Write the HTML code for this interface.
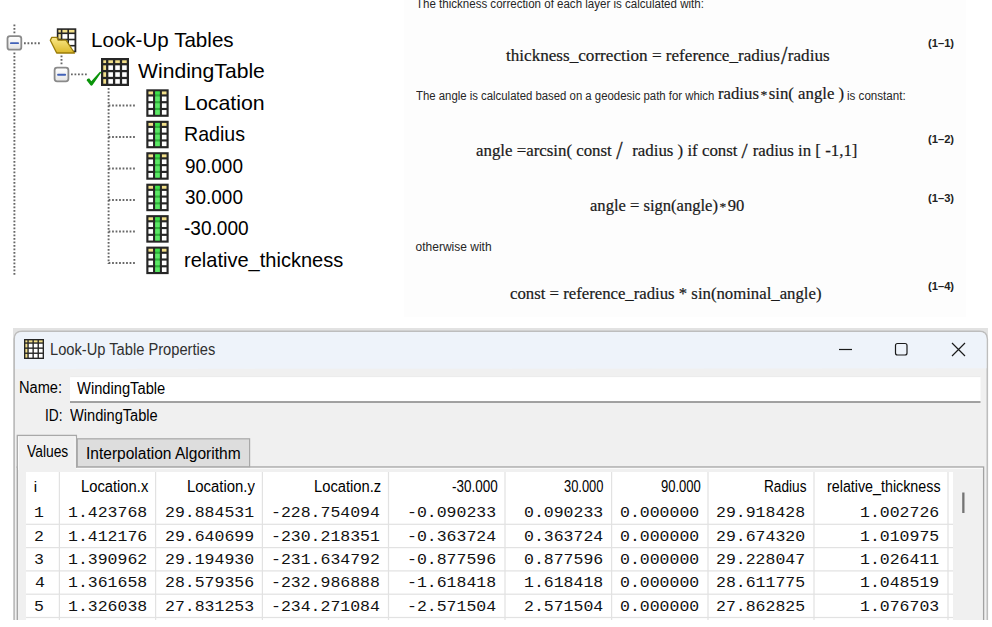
<!DOCTYPE html><html><head><meta charset="utf-8"><style>
html,body{margin:0;padding:0;width:992px;height:627px;overflow:hidden;background:#fff;position:relative}
.t{position:absolute;white-space:pre;line-height:normal}
</style></head><body>
<svg style="position:absolute;left:0;top:0" width="992" height="627"><defs><linearGradient id="bg" x1="0" y1="0" x2="0" y2="1"><stop offset="0" stop-color="#fff"/><stop offset="1" stop-color="#e4e4e4"/></linearGradient><linearGradient id="fold" x1="0" y1="0" x2="0" y2="1"><stop offset="0" stop-color="#fbe98a"/><stop offset="1" stop-color="#dcb92a"/></linearGradient></defs><line x1="14.4" y1="24.5" x2="14.4" y2="34.5" stroke="#666" stroke-width="1.9" stroke-dasharray="1.75 1.75"/><line x1="14.4" y1="52.5" x2="14.4" y2="275" stroke="#666" stroke-width="1.9" stroke-dasharray="1.75 1.75"/><line x1="24" y1="43.2" x2="41" y2="43.2" stroke="#666" stroke-width="1.9" stroke-dasharray="1.75 1.75"/><line x1="61.5" y1="55.5" x2="61.5" y2="66" stroke="#666" stroke-width="1.9" stroke-dasharray="1.75 1.75"/><line x1="71" y1="74.4" x2="87" y2="74.4" stroke="#666" stroke-width="1.9" stroke-dasharray="1.75 1.75"/><line x1="108.6" y1="88" x2="108.6" y2="264" stroke="#666" stroke-width="1.9" stroke-dasharray="1.75 1.75"/><line x1="108.6" y1="105.5" x2="135" y2="105.5" stroke="#666" stroke-width="1.9" stroke-dasharray="1.75 1.75"/><line x1="108.6" y1="137.0" x2="135" y2="137.0" stroke="#666" stroke-width="1.9" stroke-dasharray="1.75 1.75"/><line x1="108.6" y1="168.5" x2="135" y2="168.5" stroke="#666" stroke-width="1.9" stroke-dasharray="1.75 1.75"/><line x1="108.6" y1="200.0" x2="135" y2="200.0" stroke="#666" stroke-width="1.9" stroke-dasharray="1.75 1.75"/><line x1="108.6" y1="231.5" x2="135" y2="231.5" stroke="#666" stroke-width="1.9" stroke-dasharray="1.75 1.75"/><line x1="108.6" y1="263.0" x2="135" y2="263.0" stroke="#666" stroke-width="1.9" stroke-dasharray="1.75 1.75"/><rect x="7.5" y="36.1" width="13.8" height="13.6" rx="2.5" fill="url(#bg)" stroke="#8a8a8a" stroke-width="1.8"/><rect x="10.0" y="42.2" width="9" height="1.9" rx="0.9" fill="#4262b8"/><rect x="54.6" y="67.7" width="13.8" height="13.6" rx="2.5" fill="url(#bg)" stroke="#8a8a8a" stroke-width="1.8"/><rect x="57.1" y="73.8" width="9" height="1.9" rx="0.9" fill="#4262b8"/><g transform="translate(56.8,28.3)"><rect x="0" y="0" width="19.5" height="24" fill="#262626"/><rect x="1.6" y="1.6" width="2.4" height="2.6" fill="#f3e08a"/><rect x="1.6" y="5.8" width="2.4" height="4.6" fill="#f3e08a"/><rect x="1.6" y="12" width="2.4" height="4.6" fill="#f3e08a"/><rect x="1.6" y="18.2" width="2.4" height="4.2" fill="#f3e08a"/><rect x="5.6" y="1.6" width="5" height="2.6" fill="#f3e08a"/><rect x="5.6" y="5.8" width="5" height="4.6" fill="#ffffff"/><rect x="5.6" y="12" width="5" height="4.6" fill="#ffffff"/><rect x="5.6" y="18.2" width="5" height="4.2" fill="#ffffff"/><rect x="12.2" y="1.6" width="5.5" height="2.6" fill="#f3e08a"/><rect x="12.2" y="5.8" width="5.5" height="4.6" fill="#ffffff"/><rect x="12.2" y="12" width="5.5" height="4.6" fill="#ffffff"/><rect x="12.2" y="18.2" width="5.5" height="4.2" fill="#ffffff"/></g><polygon points="50.3,40.2 51.8,37.4 57,37.4 58.2,40.2 66,40.2 74.5,53 56.7,53" fill="url(#fold)" stroke="#9a7c08" stroke-width="1.3" stroke-linejoin="round"/><g transform="translate(101,58) scale(1.75)"><rect x="0" y="0" width="16" height="16" fill="#262626"/><rect x="1.300" y="1.300" width="1.600" height="1.600" fill="#f3e08a"/><rect x="1.300" y="4.200" width="1.600" height="2.633" fill="#f3e08a"/><rect x="1.300" y="8.133" width="1.600" height="2.633" fill="#f3e08a"/><rect x="1.300" y="12.067" width="1.600" height="2.633" fill="#f3e08a"/><rect x="4.200" y="1.300" width="2.633" height="1.600" fill="#f3e08a"/><rect x="4.200" y="4.200" width="2.633" height="2.633" fill="#ffffff"/><rect x="4.200" y="8.133" width="2.633" height="2.633" fill="#ffffff"/><rect x="4.200" y="12.067" width="2.633" height="2.633" fill="#ffffff"/><rect x="8.133" y="1.300" width="2.633" height="1.600" fill="#f3e08a"/><rect x="8.133" y="4.200" width="2.633" height="2.633" fill="#ffffff"/><rect x="8.133" y="8.133" width="2.633" height="2.633" fill="#ffffff"/><rect x="8.133" y="12.067" width="2.633" height="2.633" fill="#ffffff"/><rect x="12.067" y="1.300" width="2.633" height="1.600" fill="#f3e08a"/><rect x="12.067" y="4.200" width="2.633" height="2.633" fill="#ffffff"/><rect x="12.067" y="8.133" width="2.633" height="2.633" fill="#ffffff"/><rect x="12.067" y="12.067" width="2.633" height="2.633" fill="#ffffff"/></g><path d="M86.6,80.2 Q87.2,77.9 89.4,78.6 L91.3,81.3 L99.9,71.7 Q101,71.4 101.2,72.6 L92.6,84.9 Q91.4,86.4 90.3,85 Z" fill="#0a940a"/><g transform="translate(146.3,89.3) scale(1.72)"><rect x="0" y="0" width="13" height="16" fill="#262626"/><rect x="1.250" y="1.250" width="2.667" height="1.700" fill="#f3e08a"/><rect x="1.250" y="4.200" width="2.667" height="2.683" fill="#ffffff"/><rect x="1.250" y="8.133" width="2.667" height="2.683" fill="#ffffff"/><rect x="1.250" y="12.067" width="2.667" height="2.683" fill="#ffffff"/><rect x="5.167" y="1.25" width="2.667" height="13.5" fill="#2fb53a"/><rect x="5.167" y="1.250" width="2.667" height="1.700" fill="#3fe24a"/><rect x="5.167" y="4.200" width="2.667" height="2.683" fill="#5ce866"/><rect x="5.167" y="8.133" width="2.667" height="2.683" fill="#5ce866"/><rect x="5.167" y="12.067" width="2.667" height="2.683" fill="#5ce866"/><rect x="9.083" y="1.250" width="2.667" height="1.700" fill="#f3e08a"/><rect x="9.083" y="4.200" width="2.667" height="2.683" fill="#ffffff"/><rect x="9.083" y="8.133" width="2.667" height="2.683" fill="#ffffff"/><rect x="9.083" y="12.067" width="2.667" height="2.683" fill="#ffffff"/></g><g transform="translate(146.3,120.75999999999999) scale(1.72)"><rect x="0" y="0" width="13" height="16" fill="#262626"/><rect x="1.250" y="1.250" width="2.667" height="1.700" fill="#f3e08a"/><rect x="1.250" y="4.200" width="2.667" height="2.683" fill="#ffffff"/><rect x="1.250" y="8.133" width="2.667" height="2.683" fill="#ffffff"/><rect x="1.250" y="12.067" width="2.667" height="2.683" fill="#ffffff"/><rect x="5.167" y="1.25" width="2.667" height="13.5" fill="#2fb53a"/><rect x="5.167" y="1.250" width="2.667" height="1.700" fill="#3fe24a"/><rect x="5.167" y="4.200" width="2.667" height="2.683" fill="#5ce866"/><rect x="5.167" y="8.133" width="2.667" height="2.683" fill="#5ce866"/><rect x="5.167" y="12.067" width="2.667" height="2.683" fill="#5ce866"/><rect x="9.083" y="1.250" width="2.667" height="1.700" fill="#f3e08a"/><rect x="9.083" y="4.200" width="2.667" height="2.683" fill="#ffffff"/><rect x="9.083" y="8.133" width="2.667" height="2.683" fill="#ffffff"/><rect x="9.083" y="12.067" width="2.667" height="2.683" fill="#ffffff"/></g><g transform="translate(146.3,152.22) scale(1.72)"><rect x="0" y="0" width="13" height="16" fill="#262626"/><rect x="1.250" y="1.250" width="2.667" height="1.700" fill="#f3e08a"/><rect x="1.250" y="4.200" width="2.667" height="2.683" fill="#ffffff"/><rect x="1.250" y="8.133" width="2.667" height="2.683" fill="#ffffff"/><rect x="1.250" y="12.067" width="2.667" height="2.683" fill="#ffffff"/><rect x="5.167" y="1.25" width="2.667" height="13.5" fill="#2fb53a"/><rect x="5.167" y="1.250" width="2.667" height="1.700" fill="#3fe24a"/><rect x="5.167" y="4.200" width="2.667" height="2.683" fill="#5ce866"/><rect x="5.167" y="8.133" width="2.667" height="2.683" fill="#5ce866"/><rect x="5.167" y="12.067" width="2.667" height="2.683" fill="#5ce866"/><rect x="9.083" y="1.250" width="2.667" height="1.700" fill="#f3e08a"/><rect x="9.083" y="4.200" width="2.667" height="2.683" fill="#ffffff"/><rect x="9.083" y="8.133" width="2.667" height="2.683" fill="#ffffff"/><rect x="9.083" y="12.067" width="2.667" height="2.683" fill="#ffffff"/></g><g transform="translate(146.3,183.68) scale(1.72)"><rect x="0" y="0" width="13" height="16" fill="#262626"/><rect x="1.250" y="1.250" width="2.667" height="1.700" fill="#f3e08a"/><rect x="1.250" y="4.200" width="2.667" height="2.683" fill="#ffffff"/><rect x="1.250" y="8.133" width="2.667" height="2.683" fill="#ffffff"/><rect x="1.250" y="12.067" width="2.667" height="2.683" fill="#ffffff"/><rect x="5.167" y="1.25" width="2.667" height="13.5" fill="#2fb53a"/><rect x="5.167" y="1.250" width="2.667" height="1.700" fill="#3fe24a"/><rect x="5.167" y="4.200" width="2.667" height="2.683" fill="#5ce866"/><rect x="5.167" y="8.133" width="2.667" height="2.683" fill="#5ce866"/><rect x="5.167" y="12.067" width="2.667" height="2.683" fill="#5ce866"/><rect x="9.083" y="1.250" width="2.667" height="1.700" fill="#f3e08a"/><rect x="9.083" y="4.200" width="2.667" height="2.683" fill="#ffffff"/><rect x="9.083" y="8.133" width="2.667" height="2.683" fill="#ffffff"/><rect x="9.083" y="12.067" width="2.667" height="2.683" fill="#ffffff"/></g><g transform="translate(146.3,215.14) scale(1.72)"><rect x="0" y="0" width="13" height="16" fill="#262626"/><rect x="1.250" y="1.250" width="2.667" height="1.700" fill="#f3e08a"/><rect x="1.250" y="4.200" width="2.667" height="2.683" fill="#ffffff"/><rect x="1.250" y="8.133" width="2.667" height="2.683" fill="#ffffff"/><rect x="1.250" y="12.067" width="2.667" height="2.683" fill="#ffffff"/><rect x="5.167" y="1.25" width="2.667" height="13.5" fill="#2fb53a"/><rect x="5.167" y="1.250" width="2.667" height="1.700" fill="#3fe24a"/><rect x="5.167" y="4.200" width="2.667" height="2.683" fill="#5ce866"/><rect x="5.167" y="8.133" width="2.667" height="2.683" fill="#5ce866"/><rect x="5.167" y="12.067" width="2.667" height="2.683" fill="#5ce866"/><rect x="9.083" y="1.250" width="2.667" height="1.700" fill="#f3e08a"/><rect x="9.083" y="4.200" width="2.667" height="2.683" fill="#ffffff"/><rect x="9.083" y="8.133" width="2.667" height="2.683" fill="#ffffff"/><rect x="9.083" y="12.067" width="2.667" height="2.683" fill="#ffffff"/></g><g transform="translate(146.3,246.60000000000002) scale(1.72)"><rect x="0" y="0" width="13" height="16" fill="#262626"/><rect x="1.250" y="1.250" width="2.667" height="1.700" fill="#f3e08a"/><rect x="1.250" y="4.200" width="2.667" height="2.683" fill="#ffffff"/><rect x="1.250" y="8.133" width="2.667" height="2.683" fill="#ffffff"/><rect x="1.250" y="12.067" width="2.667" height="2.683" fill="#ffffff"/><rect x="5.167" y="1.25" width="2.667" height="13.5" fill="#2fb53a"/><rect x="5.167" y="1.250" width="2.667" height="1.700" fill="#3fe24a"/><rect x="5.167" y="4.200" width="2.667" height="2.683" fill="#5ce866"/><rect x="5.167" y="8.133" width="2.667" height="2.683" fill="#5ce866"/><rect x="5.167" y="12.067" width="2.667" height="2.683" fill="#5ce866"/><rect x="9.083" y="1.250" width="2.667" height="1.700" fill="#f3e08a"/><rect x="9.083" y="4.200" width="2.667" height="2.683" fill="#ffffff"/><rect x="9.083" y="8.133" width="2.667" height="2.683" fill="#ffffff"/><rect x="9.083" y="12.067" width="2.667" height="2.683" fill="#ffffff"/></g></svg>
<div class="t" style="left:90.52px;top:28px;font-family:'Liberation Sans', sans-serif;font-size:21px;color:#000;font-weight:normal;transform:scaleX(0.9799);transform-origin:0 0;">Look-Up Tables</div>
<div class="t" style="left:138.00px;top:59px;font-family:'Liberation Sans', sans-serif;font-size:21px;color:#000;font-weight:normal;transform:scaleX(1.0063);transform-origin:0 0;">WindingTable</div>
<div class="t" style="left:184.38px;top:91px;font-family:'Liberation Sans', sans-serif;font-size:21px;color:#000;font-weight:normal;transform:scaleX(1.0169);transform-origin:0 0;">Location</div>
<div class="t" style="left:184.47px;top:122px;font-family:'Liberation Sans', sans-serif;font-size:21px;color:#000;font-weight:normal;transform:scaleX(0.9328);transform-origin:0 0;">Radius</div>
<div class="t" style="left:184.50px;top:154px;font-family:'Liberation Sans', sans-serif;font-size:21px;color:#000;font-weight:normal;transform:scaleX(0.9016);transform-origin:0 0;">90.000</div>
<div class="t" style="left:184.50px;top:185px;font-family:'Liberation Sans', sans-serif;font-size:21px;color:#000;font-weight:normal;transform:scaleX(0.9016);transform-origin:0 0;">30.000</div>
<div class="t" style="left:184.49px;top:216px;font-family:'Liberation Sans', sans-serif;font-size:21px;color:#000;font-weight:normal;transform:scaleX(0.9071);transform-origin:0 0;">-30.000</div>
<div class="t" style="left:184.45px;top:248px;font-family:'Liberation Sans', sans-serif;font-size:21px;color:#000;font-weight:normal;transform:scaleX(0.9542);transform-origin:0 0;">relative_thickness</div>
<div style="position:absolute;left:404px;top:0;width:562px;height:317px;background:#fdfdfd"></div>
<div class="t" style="left:416.00px;top:-3px;font-family:'Liberation Sans', sans-serif;font-size:12px;color:#262626;font-weight:normal;transform:scaleX(0.9612);transform-origin:0 0;">The thickness correction of each layer is calculated with:</div>
<div class="t" style="left:506.00px;top:47px;font-family:'Liberation Serif', serif;font-size:16px;color:#1a1a1a;font-weight:normal;transform:scaleX(1.0695);transform-origin:0 0;-webkit-text-stroke:0.2px #1a1a1a;">thickness_correction = reference_radius<span style="display:inline-block;transform:scale(1.35,1.6);margin:0 1.5px">/</span>radius</div>
<div class="t" style="left:416.00px;top:89px;font-family:'Liberation Sans', sans-serif;font-size:12px;color:#262626;font-weight:normal;transform:scaleX(0.9473);transform-origin:0 0;">The angle is calculated based on a geodesic path for which</div>
<div class="t" style="left:718.10px;top:85px;font-family:'Liberation Serif', serif;font-size:16px;color:#1a1a1a;font-weight:normal;transform:scaleX(1.0458);transform-origin:0 0;-webkit-text-stroke:0.2px #1a1a1a;">radius<span style="position:relative;top:-0.5px;font-size:13px;margin:0 1.5px">*</span>sin( angle )</div>
<div class="t" style="left:847.00px;top:89px;font-family:'Liberation Sans', sans-serif;font-size:12px;color:#262626;font-weight:normal;transform:scaleX(0.9667);transform-origin:0 0;">is constant:</div>
<div class="t" style="left:476.00px;top:142px;font-family:'Liberation Serif', serif;font-size:16px;color:#1a1a1a;font-weight:normal;transform:scaleX(1.0525);transform-origin:0 0;-webkit-text-stroke:0.2px #1a1a1a;">angle =arcsin( const <span style="display:inline-block;transform:scale(1.35,1.6);margin:0 1.5px">/</span>  radius ) if const <span style="display:inline-block;transform:scale(1.3);margin:0 1px">/</span> radius in [ -1,1]</div>
<div class="t" style="left:590.00px;top:197px;font-family:'Liberation Serif', serif;font-size:16px;color:#1a1a1a;font-weight:normal;transform:scaleX(1.0349);transform-origin:0 0;-webkit-text-stroke:0.2px #1a1a1a;">angle = sign(angle)<span style="position:relative;top:-0.5px;font-size:13px;margin:0 1.5px">*</span>90</div>
<div class="t" style="left:415.60px;top:240px;font-family:'Liberation Sans', sans-serif;font-size:12px;color:#262626;font-weight:normal;">otherwise with</div>
<div class="t" style="left:510.30px;top:285px;font-family:'Liberation Serif', serif;font-size:16px;color:#1a1a1a;font-weight:normal;transform:scaleX(1.0460);transform-origin:0 0;-webkit-text-stroke:0.2px #1a1a1a;">const = reference_radius * sin(nominal_angle)</div>
<div class="t" style="left:927.60px;top:37px;font-family:'Liberation Sans', sans-serif;font-size:11.5px;color:#222;font-weight:bold;transform:scaleX(0.9704);transform-origin:0 0;">(1–1)</div>
<div class="t" style="left:927.60px;top:133px;font-family:'Liberation Sans', sans-serif;font-size:11.5px;color:#222;font-weight:bold;transform:scaleX(0.9704);transform-origin:0 0;">(1–2)</div>
<div class="t" style="left:927.60px;top:192px;font-family:'Liberation Sans', sans-serif;font-size:11.5px;color:#222;font-weight:bold;transform:scaleX(0.9704);transform-origin:0 0;">(1–3)</div>
<div class="t" style="left:927.60px;top:280px;font-family:'Liberation Sans', sans-serif;font-size:11.5px;color:#222;font-weight:bold;transform:scaleX(0.9704);transform-origin:0 0;">(1–4)</div>
<div style="position:absolute;left:13px;top:328px;width:975px;height:299px;background:#e2e2e2"></div>
<svg style="position:absolute;left:0;top:0" width="992" height="627"><path d="M14.2,640 V339.3 Q14.2,331.3 22.2,331.3 H979.3 Q987.3,331.3 987.3,339.3 V640 Z" fill="#f0f0f0" stroke="#bdbdbd" stroke-width="1.6"/><path d="M15,369 V339.3 Q15,332.1 22.2,332.1 H979.3 Q986.5,332.1 986.5,339.3 V368.3 Z" fill="#eef3fa"/><g transform="translate(24,339) scale(1.25)"><rect x="0" y="0" width="16" height="16" fill="#262626"/><rect x="1.100" y="1.100" width="1.600" height="1.600" fill="#f3e08a"/><rect x="1.100" y="3.800" width="1.600" height="2.967" fill="#f3e08a"/><rect x="1.100" y="7.867" width="1.600" height="2.967" fill="#f3e08a"/><rect x="1.100" y="11.933" width="1.600" height="2.967" fill="#f3e08a"/><rect x="3.800" y="1.100" width="2.967" height="1.600" fill="#f3e08a"/><rect x="3.800" y="3.800" width="2.967" height="2.967" fill="#ffffff"/><rect x="3.800" y="7.867" width="2.967" height="2.967" fill="#ffffff"/><rect x="3.800" y="11.933" width="2.967" height="2.967" fill="#ffffff"/><rect x="7.867" y="1.100" width="2.967" height="1.600" fill="#f3e08a"/><rect x="7.867" y="3.800" width="2.967" height="2.967" fill="#ffffff"/><rect x="7.867" y="7.867" width="2.967" height="2.967" fill="#ffffff"/><rect x="7.867" y="11.933" width="2.967" height="2.967" fill="#ffffff"/><rect x="11.933" y="1.100" width="2.967" height="1.600" fill="#f3e08a"/><rect x="11.933" y="3.800" width="2.967" height="2.967" fill="#ffffff"/><rect x="11.933" y="7.867" width="2.967" height="2.967" fill="#ffffff"/><rect x="11.933" y="11.933" width="2.967" height="2.967" fill="#ffffff"/></g><line x1="839" y1="349.5" x2="852" y2="349.5" stroke="#1a1a1a" stroke-width="1.2"/><rect x="895.5" y="343.5" width="11.5" height="11.5" rx="2" fill="none" stroke="#1a1a1a" stroke-width="1.2"/><path d="M952,343 L965,356 M965,343 L952,356" stroke="#1a1a1a" stroke-width="1.2"/><rect x="70" y="376.3" width="910.5" height="26" rx="1.5" fill="#fff"/><rect x="70.5" y="376.3" width="909.5" height="0.8" fill="#e6e6e6"/><rect x="70" y="401.2" width="910.5" height="1.6" fill="#8c8c8c"/><rect x="17.3" y="467" width="966.3" height="200" fill="#f0f0f0" stroke="#a2a2a2" stroke-width="1.3"/><rect x="77.3" y="438.8" width="172.3" height="28" fill="#dddddd" stroke="#a8a8a8" stroke-width="1.2"/><path d="M17.3,468 V435.3 H76.4 V468" fill="#f0f0f0" stroke="#a8a8a8" stroke-width="1.3"/><rect x="18" y="467" width="58" height="3" fill="#f0f0f0"/><line x1="75.2" y1="436.5" x2="75.2" y2="467" stroke="#fafafa" stroke-width="1"/><line x1="76" y1="468.4" x2="983" y2="468.4" stroke="#fbfbfb" stroke-width="1"/><line x1="18.5" y1="436.5" x2="18.5" y2="470" stroke="#fafafa" stroke-width="1"/></svg>
<div class="t" style="left:49.78px;top:341px;font-family:'Liberation Sans', sans-serif;font-size:16px;color:#303030;font-weight:normal;transform:scaleX(0.9168);transform-origin:0 0;">Look-Up Table Properties</div>
<div class="t" style="left:19.39px;top:379px;font-family:'Liberation Sans', sans-serif;font-size:16px;color:#000;font-weight:normal;transform:scaleX(0.9133);transform-origin:0 0;">Name:</div>
<div class="t" style="left:76.80px;top:380px;font-family:'Liberation Sans', sans-serif;font-size:16px;color:#000;font-weight:normal;transform:scaleX(0.9188);transform-origin:0 0;">WindingTable</div>
<div class="t" style="left:45.14px;top:407px;font-family:'Liberation Sans', sans-serif;font-size:16px;color:#000;font-weight:normal;transform:scaleX(0.8556);transform-origin:0 0;">ID:</div>
<div class="t" style="left:70.00px;top:407px;font-family:'Liberation Sans', sans-serif;font-size:16px;color:#000;font-weight:normal;transform:scaleX(0.9135);transform-origin:0 0;">WindingTable</div>
<div class="t" style="left:27.00px;top:443px;font-family:'Liberation Sans', sans-serif;font-size:16px;color:#000;font-weight:normal;transform:scaleX(0.8646);transform-origin:0 0;">Values</div>
<div class="t" style="left:86.23px;top:445px;font-family:'Liberation Sans', sans-serif;font-size:16px;color:#000;font-weight:normal;transform:scaleX(0.9709);transform-origin:0 0;">Interpolation Algorithm</div>
<svg style="position:absolute;left:0;top:0" width="992" height="627"><rect x="26" y="472" width="927" height="148" fill="#fff"/><rect x="58.8" y="472" width="1.2" height="148" fill="#e2e2e2"/><rect x="155.0" y="472" width="1.2" height="148" fill="#e2e2e2"/><rect x="261.79999999999995" y="472" width="1.2" height="148" fill="#e2e2e2"/><rect x="387.9" y="472" width="1.2" height="148" fill="#e2e2e2"/><rect x="504.4" y="472" width="1.2" height="148" fill="#e2e2e2"/><rect x="611.0" y="472" width="1.2" height="148" fill="#e2e2e2"/><rect x="707.4" y="472" width="1.2" height="148" fill="#e2e2e2"/><rect x="813.4" y="472" width="1.2" height="148" fill="#e2e2e2"/><rect x="947.4" y="472" width="1.2" height="148" fill="#e2e2e2"/><rect x="26" y="523.6999999999999" width="927" height="1.2" fill="#e2e2e2"/><rect x="26" y="547.0" width="927" height="1.2" fill="#e2e2e2"/><rect x="26" y="570.3" width="927" height="1.2" fill="#e2e2e2"/><rect x="26" y="593.6" width="927" height="1.2" fill="#e2e2e2"/><rect x="26" y="616.9" width="927" height="1.2" fill="#e2e2e2"/><rect x="962.2" y="492.5" width="2.3" height="20.5" fill="#747474"/><rect x="0" y="620" width="992" height="7" fill="#fff"/></svg>
<div class="t" style="left:33.70px;top:478px;font-family:'Liberation Sans', sans-serif;font-size:15px;color:#000;font-weight:normal;">i</div>
<div class="t" style="left:80.78px;top:478px;font-family:'Liberation Sans', sans-serif;font-size:16px;color:#000;font-weight:normal;transform:scaleX(0.9222);transform-origin:0 0;">Location.x</div>
<div class="t" style="left:187.37px;top:478px;font-family:'Liberation Sans', sans-serif;font-size:16px;color:#000;font-weight:normal;transform:scaleX(0.9306);transform-origin:0 0;">Location.y</div>
<div class="t" style="left:314.48px;top:478px;font-family:'Liberation Sans', sans-serif;font-size:16px;color:#000;font-weight:normal;transform:scaleX(0.9208);transform-origin:0 0;">Location.z</div>
<div class="t" style="left:452.00px;top:478px;font-family:'Liberation Sans', sans-serif;font-size:16px;color:#000;font-weight:normal;transform:scaleX(0.8407);transform-origin:0 0;">-30.000</div>
<div class="t" style="left:564.30px;top:478px;font-family:'Liberation Sans', sans-serif;font-size:16px;color:#000;font-weight:normal;transform:scaleX(0.8061);transform-origin:0 0;">30.000</div>
<div class="t" style="left:660.50px;top:478px;font-family:'Liberation Sans', sans-serif;font-size:16px;color:#000;font-weight:normal;transform:scaleX(0.8143);transform-origin:0 0;">90.000</div>
<div class="t" style="left:764.05px;top:478px;font-family:'Liberation Sans', sans-serif;font-size:16px;color:#000;font-weight:normal;transform:scaleX(0.8531);transform-origin:0 0;">Radius</div>
<div class="t" style="left:826.91px;top:478px;font-family:'Liberation Sans', sans-serif;font-size:16px;color:#000;font-weight:normal;transform:scaleX(0.8929);transform-origin:0 0;">relative_thickness</div>
<div class="t" style="left:34.28px;top:505px;font-family:'Liberation Mono', monospace;font-size:14.8px;color:#111;font-weight:normal;transform:scaleX(1.1150);transform-origin:0 0;">1</div>
<div class="t" style="left:67.89px;top:505px;font-family:'Liberation Mono', monospace;font-size:14.8px;color:#111;font-weight:normal;transform:scaleX(1.1150);transform-origin:0 0;">1.423768</div>
<div class="t" style="left:164.79px;top:505px;font-family:'Liberation Mono', monospace;font-size:14.8px;color:#111;font-weight:normal;transform:scaleX(1.1150);transform-origin:0 0;">29.884531</div>
<div class="t" style="left:271.09px;top:505px;font-family:'Liberation Mono', monospace;font-size:14.8px;color:#111;font-weight:normal;transform:scaleX(1.1150);transform-origin:0 0;">-228.754094</div>
<div class="t" style="left:407.39px;top:505px;font-family:'Liberation Mono', monospace;font-size:14.8px;color:#111;font-weight:normal;transform:scaleX(1.1150);transform-origin:0 0;">-0.090233</div>
<div class="t" style="left:523.89px;top:505px;font-family:'Liberation Mono', monospace;font-size:14.8px;color:#111;font-weight:normal;transform:scaleX(1.1150);transform-origin:0 0;">0.090233</div>
<div class="t" style="left:620.29px;top:505px;font-family:'Liberation Mono', monospace;font-size:14.8px;color:#111;font-weight:normal;transform:scaleX(1.1150);transform-origin:0 0;">0.000000</div>
<div class="t" style="left:716.39px;top:505px;font-family:'Liberation Mono', monospace;font-size:14.8px;color:#111;font-weight:normal;transform:scaleX(1.1150);transform-origin:0 0;">29.918428</div>
<div class="t" style="left:860.29px;top:505px;font-family:'Liberation Mono', monospace;font-size:14.8px;color:#111;font-weight:normal;transform:scaleX(1.1150);transform-origin:0 0;">1.002726</div>
<div class="t" style="left:34.28px;top:529px;font-family:'Liberation Mono', monospace;font-size:14.8px;color:#111;font-weight:normal;transform:scaleX(1.1150);transform-origin:0 0;">2</div>
<div class="t" style="left:67.89px;top:529px;font-family:'Liberation Mono', monospace;font-size:14.8px;color:#111;font-weight:normal;transform:scaleX(1.1150);transform-origin:0 0;">1.412176</div>
<div class="t" style="left:164.79px;top:529px;font-family:'Liberation Mono', monospace;font-size:14.8px;color:#111;font-weight:normal;transform:scaleX(1.1150);transform-origin:0 0;">29.640699</div>
<div class="t" style="left:271.09px;top:529px;font-family:'Liberation Mono', monospace;font-size:14.8px;color:#111;font-weight:normal;transform:scaleX(1.1150);transform-origin:0 0;">-230.218351</div>
<div class="t" style="left:407.39px;top:529px;font-family:'Liberation Mono', monospace;font-size:14.8px;color:#111;font-weight:normal;transform:scaleX(1.1150);transform-origin:0 0;">-0.363724</div>
<div class="t" style="left:523.89px;top:529px;font-family:'Liberation Mono', monospace;font-size:14.8px;color:#111;font-weight:normal;transform:scaleX(1.1150);transform-origin:0 0;">0.363724</div>
<div class="t" style="left:620.29px;top:529px;font-family:'Liberation Mono', monospace;font-size:14.8px;color:#111;font-weight:normal;transform:scaleX(1.1150);transform-origin:0 0;">0.000000</div>
<div class="t" style="left:716.39px;top:529px;font-family:'Liberation Mono', monospace;font-size:14.8px;color:#111;font-weight:normal;transform:scaleX(1.1150);transform-origin:0 0;">29.674320</div>
<div class="t" style="left:860.29px;top:529px;font-family:'Liberation Mono', monospace;font-size:14.8px;color:#111;font-weight:normal;transform:scaleX(1.1150);transform-origin:0 0;">1.010975</div>
<div class="t" style="left:34.28px;top:552px;font-family:'Liberation Mono', monospace;font-size:14.8px;color:#111;font-weight:normal;transform:scaleX(1.1150);transform-origin:0 0;">3</div>
<div class="t" style="left:67.89px;top:552px;font-family:'Liberation Mono', monospace;font-size:14.8px;color:#111;font-weight:normal;transform:scaleX(1.1150);transform-origin:0 0;">1.390962</div>
<div class="t" style="left:164.79px;top:552px;font-family:'Liberation Mono', monospace;font-size:14.8px;color:#111;font-weight:normal;transform:scaleX(1.1150);transform-origin:0 0;">29.194930</div>
<div class="t" style="left:271.09px;top:552px;font-family:'Liberation Mono', monospace;font-size:14.8px;color:#111;font-weight:normal;transform:scaleX(1.1150);transform-origin:0 0;">-231.634792</div>
<div class="t" style="left:407.39px;top:552px;font-family:'Liberation Mono', monospace;font-size:14.8px;color:#111;font-weight:normal;transform:scaleX(1.1150);transform-origin:0 0;">-0.877596</div>
<div class="t" style="left:523.89px;top:552px;font-family:'Liberation Mono', monospace;font-size:14.8px;color:#111;font-weight:normal;transform:scaleX(1.1150);transform-origin:0 0;">0.877596</div>
<div class="t" style="left:620.29px;top:552px;font-family:'Liberation Mono', monospace;font-size:14.8px;color:#111;font-weight:normal;transform:scaleX(1.1150);transform-origin:0 0;">0.000000</div>
<div class="t" style="left:716.39px;top:552px;font-family:'Liberation Mono', monospace;font-size:14.8px;color:#111;font-weight:normal;transform:scaleX(1.1150);transform-origin:0 0;">29.228047</div>
<div class="t" style="left:860.29px;top:552px;font-family:'Liberation Mono', monospace;font-size:14.8px;color:#111;font-weight:normal;transform:scaleX(1.1150);transform-origin:0 0;">1.026411</div>
<div class="t" style="left:35.40px;top:575px;font-family:'Liberation Mono', monospace;font-size:14.8px;color:#111;font-weight:normal;transform:scaleX(1.1150);transform-origin:0 0;">4</div>
<div class="t" style="left:67.89px;top:575px;font-family:'Liberation Mono', monospace;font-size:14.8px;color:#111;font-weight:normal;transform:scaleX(1.1150);transform-origin:0 0;">1.361658</div>
<div class="t" style="left:164.79px;top:575px;font-family:'Liberation Mono', monospace;font-size:14.8px;color:#111;font-weight:normal;transform:scaleX(1.1150);transform-origin:0 0;">28.579356</div>
<div class="t" style="left:271.09px;top:575px;font-family:'Liberation Mono', monospace;font-size:14.8px;color:#111;font-weight:normal;transform:scaleX(1.1150);transform-origin:0 0;">-232.986888</div>
<div class="t" style="left:407.39px;top:575px;font-family:'Liberation Mono', monospace;font-size:14.8px;color:#111;font-weight:normal;transform:scaleX(1.1150);transform-origin:0 0;">-1.618418</div>
<div class="t" style="left:523.89px;top:575px;font-family:'Liberation Mono', monospace;font-size:14.8px;color:#111;font-weight:normal;transform:scaleX(1.1150);transform-origin:0 0;">1.618418</div>
<div class="t" style="left:620.29px;top:575px;font-family:'Liberation Mono', monospace;font-size:14.8px;color:#111;font-weight:normal;transform:scaleX(1.1150);transform-origin:0 0;">0.000000</div>
<div class="t" style="left:716.39px;top:575px;font-family:'Liberation Mono', monospace;font-size:14.8px;color:#111;font-weight:normal;transform:scaleX(1.1150);transform-origin:0 0;">28.611775</div>
<div class="t" style="left:860.29px;top:575px;font-family:'Liberation Mono', monospace;font-size:14.8px;color:#111;font-weight:normal;transform:scaleX(1.1150);transform-origin:0 0;">1.048519</div>
<div class="t" style="left:34.28px;top:599px;font-family:'Liberation Mono', monospace;font-size:14.8px;color:#111;font-weight:normal;transform:scaleX(1.1150);transform-origin:0 0;">5</div>
<div class="t" style="left:67.89px;top:599px;font-family:'Liberation Mono', monospace;font-size:14.8px;color:#111;font-weight:normal;transform:scaleX(1.1150);transform-origin:0 0;">1.326038</div>
<div class="t" style="left:164.79px;top:599px;font-family:'Liberation Mono', monospace;font-size:14.8px;color:#111;font-weight:normal;transform:scaleX(1.1150);transform-origin:0 0;">27.831253</div>
<div class="t" style="left:271.09px;top:599px;font-family:'Liberation Mono', monospace;font-size:14.8px;color:#111;font-weight:normal;transform:scaleX(1.1150);transform-origin:0 0;">-234.271084</div>
<div class="t" style="left:407.39px;top:599px;font-family:'Liberation Mono', monospace;font-size:14.8px;color:#111;font-weight:normal;transform:scaleX(1.1150);transform-origin:0 0;">-2.571504</div>
<div class="t" style="left:523.89px;top:599px;font-family:'Liberation Mono', monospace;font-size:14.8px;color:#111;font-weight:normal;transform:scaleX(1.1150);transform-origin:0 0;">2.571504</div>
<div class="t" style="left:620.29px;top:599px;font-family:'Liberation Mono', monospace;font-size:14.8px;color:#111;font-weight:normal;transform:scaleX(1.1150);transform-origin:0 0;">0.000000</div>
<div class="t" style="left:716.39px;top:599px;font-family:'Liberation Mono', monospace;font-size:14.8px;color:#111;font-weight:normal;transform:scaleX(1.1150);transform-origin:0 0;">27.862825</div>
<div class="t" style="left:860.29px;top:599px;font-family:'Liberation Mono', monospace;font-size:14.8px;color:#111;font-weight:normal;transform:scaleX(1.1150);transform-origin:0 0;">1.076703</div>
</body></html>
